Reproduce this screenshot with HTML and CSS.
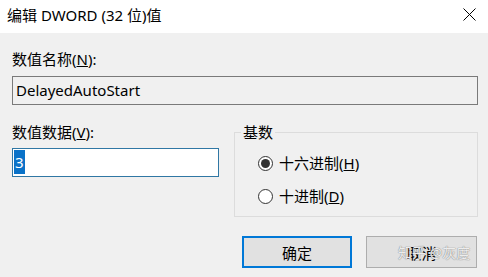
FILE: index.html
```html
<!DOCTYPE html>
<html lang="zh-CN">
	<head>
		<meta charset="UTF-8" />
		<meta name="viewport" content="width=device-width, initial-scale=1.0" />
		<title>编辑 DWORD (32 位)值</title>
		<link rel="stylesheet" href="styles.css">
	</head>
	<body>
		<div class="dialog">
			<div class="title-bar">
				<span class="title">编辑 DWORD (32 位)值</span>
				<button class="close-button" aria-label="关闭">
					<svg width="13" height="13" viewBox="0 0 13 13">
						<path d="M0.5 0.5L12.5 12.5M12.5 0.5L0.5 12.5" stroke="#000" stroke-width="1" fill="none" />
					</svg>
				</button>
			</div>

			<div class="content">
				<div class="label">数值名称(<u>N</u>):</div>
				<div class="field field-readonly">DelayedAutoStart</div>

				<div class="row">
					<div class="data-column">
						<div class="label">数值数据(<u>V</u>):</div>
						<div class="field field-focus"><span class="selected">3</span></div>
					</div>

					<fieldset class="base-group">
						<legend>基数</legend>
						<label class="radio-row">
							<span class="radio checked"></span>
							<span>十六进制(<u>H</u>)</span>
						</label>
						<label class="radio-row">
							<span class="radio"></span>
							<span>十进制(<u>D</u>)</span>
						</label>
					</fieldset>
				</div>

				<div class="buttons">
					<button class="button button-default">确定</button>
					<button class="button">
						取消
						<span class="watermark">知乎 @灰度</span>
					</button>
				</div>
			</div>
		</div>
	</body>
</html>
```

FILE: styles.css
```css
* {
	margin: 0;
	padding: 0;
	box-sizing: border-box;
	font-family: "Noto Sans", "Noto Sans CJK SC", sans-serif;
}
body {
	width: 488px;
	height: 277px;
	overflow: hidden;
	background-color: #f0f0f0;
}
.dialog {
	width: 488px;
	height: 277px;
	display: flex;
	flex-direction: column;
	color: #000;
	font-size: 14px;
}
.title-bar {
	height: 33px;
	background-color: #fff;
	display: flex;
	align-items: center;
	justify-content: space-between;
	padding-left: 7px;
	padding-right: 12px;
}
.title {
	font-size: 15px;
	line-height: 20px;
	margin-top: -3px;
}
.close-button {
	border: none;
	background: transparent;
	width: 13px;
	height: 13px;
	display: flex;
	margin-top: -5px;
}
.content {
	flex: 1;
	background-color: #f0f0f0;
	padding: 16px 10px 0 12px;
}
.label {
	font-size: 15px;
	line-height: 20px;
}
.field {
	height: 29px;
	border: 1px solid #7a7a7a;
	font-size: 15px;
	line-height: 27px;
	padding-left: 3px;
	margin-top: 7px;
}
.field-readonly {
	background-color: #f0f0f0;
}
.field-focus {
	background-color: #fff;
	border-color: #3077a4;
	padding-left: 1px;
	margin-top: 6px;
}
.selected {
	background-color: #0a72c8;
	color: #fff;
	padding: 2px 1px;
}
.row {
	display: flex;
	margin-top: 17px;
}
.data-column {
	width: 207px;
}
.base-group {
	margin-left: 15px;
	width: 244px;
	border: 1px solid #dcdcdc;
	padding: 11px 0 10px 6px;
	display: flex;
	flex-direction: column;
	gap: 13px;
}
.base-group legend {
	font-size: 15px;
	line-height: 20px;
	padding: 0 2px;
}
.radio-row {
	display: flex;
	align-items: center;
	gap: 6px;
	margin-left: 17px;
	font-size: 15px;
	line-height: 20px;
}
.radio {
	width: 15px;
	height: 15px;
	border: 1px solid #333;
	border-radius: 999px;
	background-color: #fff;
	display: flex;
	justify-content: center;
	align-items: center;
}
.radio.checked::after {
	content: "";
	width: 9px;
	height: 9px;
	border-radius: 999px;
	background-color: #333;
}
.buttons {
	display: flex;
	justify-content: flex-end;
	gap: 14px;
	margin-top: 19px;
	padding-right: 1px;
}
.button {
	position: relative;
	width: 111px;
	height: 32px;
	border: 1px solid #adadad;
	background-color: #e1e1e1;
	font-size: 15px;
	color: #000;
}
.button-default {
	width: 110px;
	border: 2px solid #0078d7;
}
.watermark {
	position: absolute;
	left: 31px;
	top: 7px;
	font-size: 14px;
	line-height: 18px;
	color: rgba(255, 255, 255, 0.85);
	text-shadow: 0 0 1px #8a8a8a, 0 0 1px #8a8a8a;
	white-space: nowrap;
}
```
